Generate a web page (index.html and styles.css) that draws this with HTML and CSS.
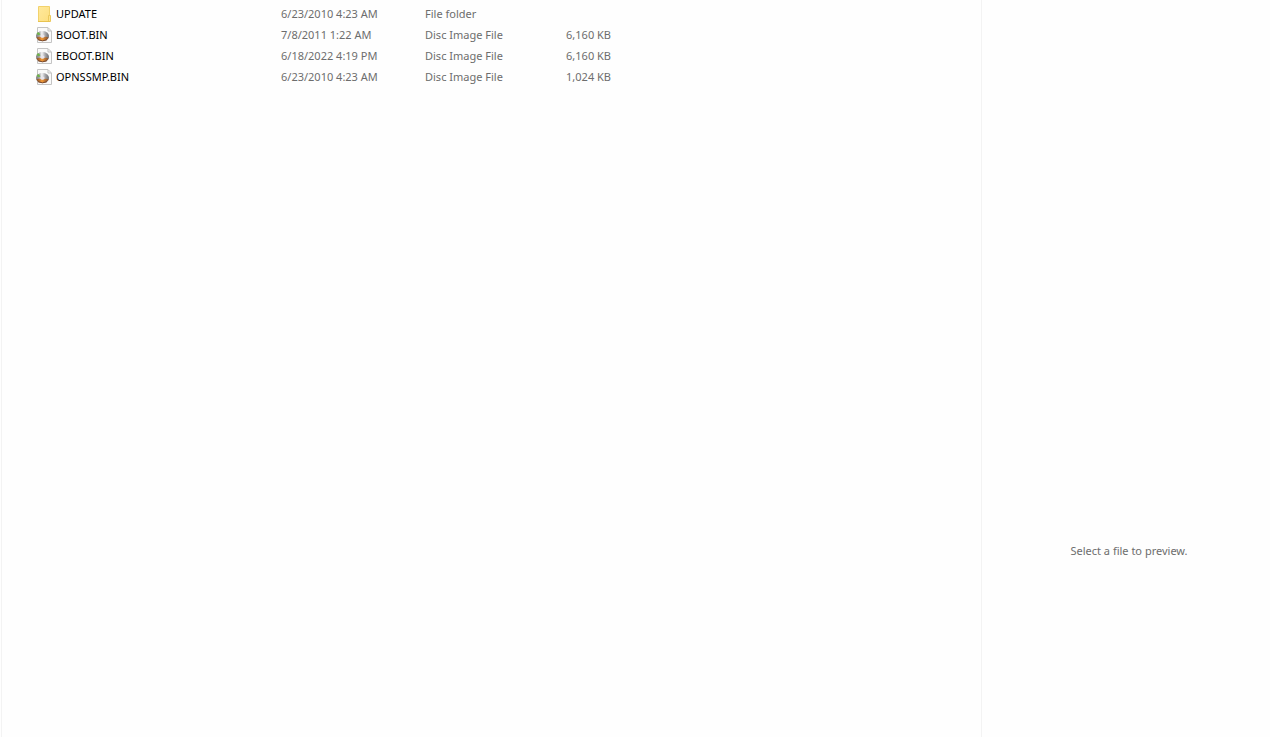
FILE: index.html
```html
<!DOCTYPE html>
<html lang="en">
<head>
<meta charset="utf-8">
<title>Files</title>
<link rel="stylesheet" href="styles.css">
</head>
<body>
<svg class="defs" aria-hidden="true">
  <defs>
    <linearGradient id="folder-fill" x1="0" y1="0" x2="1" y2="1">
      <stop offset="0" stop-color="#ffe99c"/>
      <stop offset="1" stop-color="#fddf80"/>
    </linearGradient>
    <linearGradient id="disc-fill" x1="0" y1="0" x2="1" y2="0">
      <stop offset="0" stop-color="#77777a"/>
      <stop offset=".25" stop-color="#a5a5aa"/>
      <stop offset=".45" stop-color="#f4f4f6"/>
      <stop offset=".7" stop-color="#a8a8ac"/>
      <stop offset="1" stop-color="#6c6c70"/>
    </linearGradient>
    <linearGradient id="disc-glow" x1="0" y1="0" x2="1" y2="0">
      <stop offset="0" stop-color="#7d4a2c"/>
      <stop offset=".45" stop-color="#f59c38"/>
      <stop offset="1" stop-color="#7c4a30"/>
    </linearGradient>
    <symbol id="folder" viewBox="0 0 16 16">
      <path d="M2.500.5h11v15h-11z" fill="url(#folder-fill)" stroke="#f2d26c"/>
      <path d="M12.500 9.500h2v6h-2z" fill="#fde48c" stroke="#ecc95c"/>
      <path d="M2 15.500h12" stroke="#e8c350"/>
    </symbol>
    <symbol id="disc" viewBox="0 0 16 16">
      <path d="M1.500.5h10.500l3.500 3.500v11.500h-14z" fill="#fafafa" stroke="#c4c4c4"/>
      <path d="M12 1v3h3" fill="none" stroke="#c0c0c0"/>
      <ellipse cx="6.500" cy="9" rx="6.500" ry="5" fill="url(#disc-fill)"/>
      <path d="M.5 7 2 5l2.500 2.300-1.500 1z" fill="#6db548"/>
      <path d="M.3 10.500Q3 9.500 4.500 10q2 1.500 4 0 2-.5 4.200.5Q11 14 6.500 14T.3 10.500z" fill="url(#disc-glow)"/>
      <path d="M2 12.700Q6.500 15 11 12.700" fill="none" stroke="#744830"/>
      <ellipse cx="6.500" cy="9" rx="2" ry="1.500" fill="#e8e4ec"/>
    </symbol>
  </defs>
</svg>
<main class="explorer">
  <section class="list">
    <table class="files">
      <colgroup><col class="col-name"><col class="col-date"><col class="col-type"><col class="col-size"></colgroup>
      <tbody>
        <tr><th scope="row"><span class="name"><svg class="icon"><use href="#folder"/></svg>UPDATE</span></th><td>6/23/2010 4:23 AM</td><td>File folder</td><td></td></tr>
        <tr><th scope="row"><span class="name"><svg class="icon"><use href="#disc"/></svg>BOOT.BIN</span></th><td>7/8/2011 1:22 AM</td><td>Disc Image File</td><td class="size">6,160 KB</td></tr>
        <tr><th scope="row"><span class="name"><svg class="icon"><use href="#disc"/></svg>EBOOT.BIN</span></th><td>6/18/2022 4:19 PM</td><td>Disc Image File</td><td class="size">6,160 KB</td></tr>
        <tr><th scope="row"><span class="name"><svg class="icon"><use href="#disc"/></svg>OPNSSMP.BIN</span></th><td>6/23/2010 4:23 AM</td><td>Disc Image File</td><td class="size">1,024 KB</td></tr>
      </tbody>
    </table>
  </section>
  <aside class="preview"><p class="hint">Select a file to preview.</p></aside>
</main>
</body>
</html>
```
FILE: styles.css
```css
body {
  margin: 0;
  background: #fefefe;
  color: #6d6d6d;
  font: 11px/20px "Noto Sans", "Open Sans", sans-serif;
}

.defs {
  position: absolute;
  width: 0;
  height: 0;
}

.explorer {
  display: flex;
  min-height: 100vh;
}

.list {
  flex: 1;
  margin-left: 1px;
  padding: 3px 0 0 34px;
  border-left: 1px solid #f3f3f3;
}

.files {
  table-layout: fixed;
  width: 575px;
  border-collapse: collapse;
}

.col-name { width: 245px; }
.col-date { width: 144px; }
.col-type { width: 120px; }

.files th,
.files td {
  height: 21px;
  padding: 0;
  font-weight: 400;
  text-align: left;
  white-space: nowrap;
}

.files .size {
  text-align: right;
}

.name {
  display: flex;
  align-items: center;
  gap: 4px;
  color: #000;
}

.icon {
  width: 16px;
  height: 16px;
}

.preview {
  display: flex;
  flex: 0 0 282px;
  align-items: flex-end;
  justify-content: center;
  padding: 0 0 176px 6px;
  border-left: 1px solid #f3f3f3;
}

.hint {
  margin: 0;
}
```
